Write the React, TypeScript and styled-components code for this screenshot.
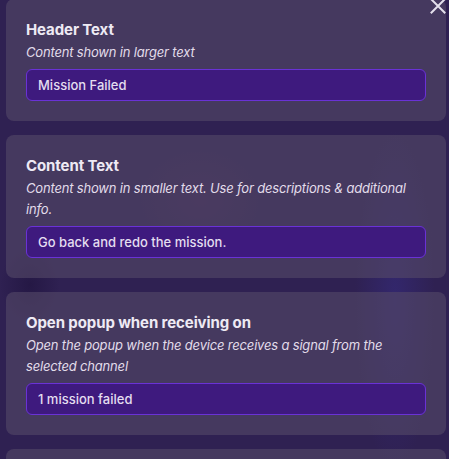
import React from "react";
import styled, { createGlobalStyle } from "styled-components";

const Global = createGlobalStyle`
  html, body {
    margin: 0;
    padding: 0;
    width: 449px;
    height: 459px;
    overflow: hidden;
  }
  body {
    font-family: Inter, "Noto Sans", sans-serif;
    background:
      radial-gradient(ellipse 40px 170px at 395px 300px, rgba(55, 45, 135, 0.5), transparent 100%),
      radial-gradient(ellipse 30px 40px at 30px 285px, rgba(30, 18, 60, 0.6), transparent 100%),
      radial-gradient(ellipse 60px 50px at 200px 200px, rgba(95, 45, 95, 0.25), transparent 100%),
      #2f2152;
  }
`;

const Page = styled.div`
  position: relative;
  width: 449px;
  height: 459px;
  overflow: hidden;
`;

const List = styled.div`
  display: flex;
  flex-direction: column;
  gap: 14px;
  padding: 0 3px 0 6px;
  margin-top: -1px;
`;

const Card = styled.section<{ $stub?: boolean }>`
  background: rgba(84, 72, 104, 0.62);
  border-radius: 8px;
  padding: 21px 20px 20px;
  display: flex;
  flex-direction: column;
  min-height: ${(p) => (p.$stub ? "80px" : "0")};
`;

const Title = styled.h3`
  margin: 0;
  font-size: 15px;
  line-height: 20px;
  font-weight: 700;
  color: #eeeaf4;
  letter-spacing: -0.1px;
`;

const Desc = styled.p`
  margin: 2px 0 6px;
  font-size: 13px;
  line-height: 21px;
  font-style: italic;
  color: #e2dcea;
  letter-spacing: -0.18px;
`;

const Field = styled.div`
  height: 32px;
  box-sizing: border-box;
  border: 1px solid #6a32d6;
  background: #3e1a7e;
  border-radius: 6px;
  padding: 0 11px;
  display: flex;
  align-items: center;
  font-size: 13px;
  font-weight: 500;
  color: #e4def0;
`;

const Close = styled.button`
  position: absolute;
  top: -3px;
  right: 2px;
  width: 18px;
  height: 18px;
  padding: 0;
  border: none;
  background: none;
  cursor: pointer;
  display: flex;
  align-items: center;
  justify-content: center;
`;

const items = [
  {
    title: "Header Text",
    desc: "Content shown in larger text",
    value: "Mission Failed",
  },
  {
    title: "Content Text",
    desc: "Content shown in smaller text. Use for descriptions & additional info.",
    value: "Go back and redo the mission.",
  },
  {
    title: "Open popup when receiving on",
    desc: "Open the popup when the device receives a signal from the selected channel",
    value: "1 mission failed",
  },
];

export default function App() {
  return (
    <Page>
      <Global />
      <List>
        {items.map((it) => (
          <Card key={it.title}>
            <Title>{it.title}</Title>
            <Desc>{it.desc}</Desc>
            <Field>{it.value}</Field>
          </Card>
        ))}
        <Card $stub aria-hidden="true" />
      </List>
      <Close aria-label="Close">
        <svg width="16" height="16" viewBox="0 0 16 16">
          <path d="M1.5 1.5 L14.5 14.5 M14.5 1.5 L1.5 14.5" stroke="#e4e0ec" strokeWidth="2" strokeLinecap="square" />
        </svg>
      </Close>
    </Page>
  );
}
